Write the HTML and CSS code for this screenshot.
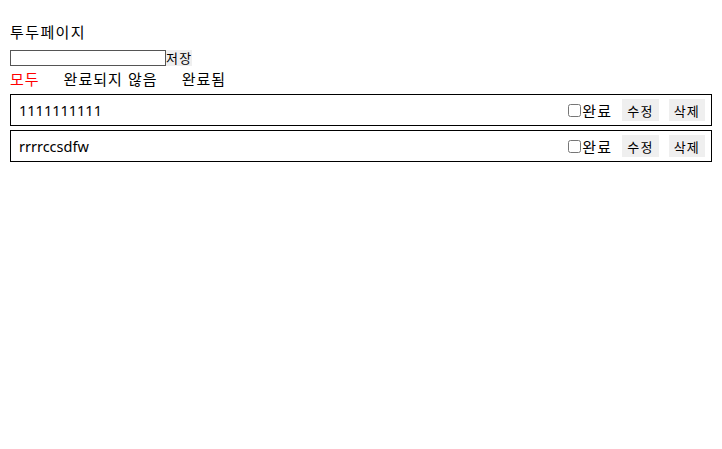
FILE: index.html
```html
<!DOCTYPE html>
<html lang="ko">
<head>
<meta charset="utf-8">
<link rel="stylesheet" href="styles.css">
</head>
<body>
<div class="app">
  <div class="title">투두페이지</div>
  <form class="add">
    <input class="add-input" type="text"><button class="add-btn" type="button">저장</button>
  </form>
  <div class="filters">
    <button class="filter active" type="button">모두</button>
    <button class="filter" type="button">완료되지 않음</button>
    <button class="filter" type="button">완료됨</button>
  </div>
  <ul class="list">
    <li class="item">
      <span class="item-text">1111111111</span>
      <label class="done"><input class="check" type="checkbox">완료</label>
      <button class="item-btn" type="button">수정</button>
      <button class="item-btn" type="button">삭제</button>
    </li>
    <li class="item">
      <span class="item-text">rrrrccsdfw</span>
      <label class="done"><input class="check" type="checkbox">완료</label>
      <button class="item-btn" type="button">수정</button>
      <button class="item-btn" type="button">삭제</button>
    </li>
  </ul>
</div>
</body>
</html>
```

FILE: styles.css
```css
html, body {
  margin: 0;
  padding: 0;
  background: #fff;
}
body {
  font-family: "Noto Sans", "Noto Sans CJK KR", sans-serif;
  font-size: 15px;
  color: #000;
}
.app {
  padding: 20px 10px 10px;
}
.title {
  line-height: 24px;
  height: 24px;
  margin-bottom: 6px;
  letter-spacing: 1.4px;
}
.add {
  display: flex;
  align-items: center;
  height: 16px;
  margin: 0;
}
.add-input {
  box-sizing: border-box;
  width: 156px;
  height: 16px;
  border: 1px solid #555;
  padding: 0 2px;
  margin: 0;
  font-size: 13px;
}
.add-btn {
  height: 16px;
  border: none;
  background: #efefef;
  padding: 0;
  margin: 0;
  font-family: "Noto Sans CJK KR", sans-serif;
  font-size: 13px;
  line-height: 16px;
  letter-spacing: 1.2px;
  color: #000;
}
.filters {
  display: flex;
  gap: 24px;
  height: 22px;
  align-items: center;
  margin-top: 2px;
}
.filter {
  border: none;
  background: none;
  padding: 0;
  font-family: "Noto Sans CJK KR", sans-serif;
  font-size: 15px;
  line-height: 20px;
  letter-spacing: 1px;
  color: #000;
}
.filter.active {
  color: #ff0000;
}
.list {
  list-style: none;
  margin: 4px 0 0;
  padding: 0;
  display: flex;
  flex-direction: column;
  gap: 4px;
}
.item {
  display: flex;
  align-items: center;
  height: 30px;
  border: 1px solid #000;
  padding: 0 6px 0 8px;
}
.item-text {
  flex: 1;
  font-size: 14.5px;
}
.done {
  display: flex;
  align-items: center;
  margin-right: 10px;
  font-family: "Noto Sans CJK KR", sans-serif;
  letter-spacing: 1.2px;
}
.check {
  width: 13px;
  height: 13px;
  margin: 0 1px 0 0;
}
.item-btn {
  height: 22px;
  border: none;
  background: #efefef;
  padding: 0 5px;
  margin: 0 0 0 10px;
  font-family: "Noto Sans CJK KR", sans-serif;
  font-size: 13px;
  letter-spacing: 1.2px;
  color: #000;
}
.done + .item-btn {
  margin-left: 0;
}
```
